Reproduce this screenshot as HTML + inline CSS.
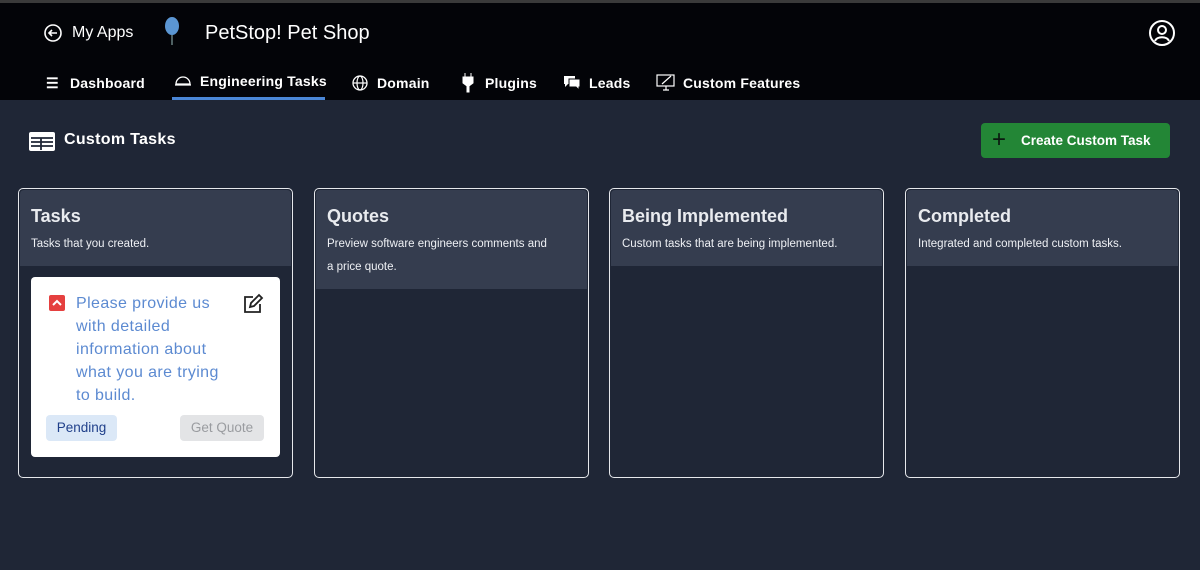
<!DOCTYPE html>
<html><head><style>
*{box-sizing:border-box;margin:0;padding:0}
body{width:1200px;height:570px;background:#1f2636;font-family:"Liberation Sans",sans-serif;position:relative;overflow:hidden;color:#fff}
.top{position:absolute;left:0;top:0;width:1200px;height:3px;background:#3a3a3a}
.hdr{position:absolute;left:0;top:3px;width:1200px;height:97px;background:#030408}
.a{position:absolute;white-space:nowrap}
.nav{font-size:14px;font-weight:bold;top:75px;letter-spacing:.2px}
.col{position:absolute;top:188px;width:275px;height:290px;border:1px solid #e6e8ec;border-radius:5px;background:#1f2636}
.ch{margin:1px;background:#353d4f;border-radius:4px 4px 0 0;padding:16px 11px 0}
.ch h3{font-size:18px;font-weight:bold;color:#e9ebef}
.ch p{font-size:11.5px;color:#eef0f4;margin-top:6px;line-height:23px;white-space:nowrap}
</style></head><body>
<div class="top"></div>
<div class="hdr"></div>
<svg class="a" style="left:43px;top:23px" width="20" height="20" viewBox="0 0 20 20"><circle cx="10" cy="10" r="8" fill="none" stroke="#fff" stroke-width="1.6"/><path d="M14 10H6M9 7L6 10L9 13" fill="none" stroke="#fff" stroke-width="1.6"/></svg>
<div class="a" style="left:72px;top:24px;font-size:16px">My Apps</div>
<svg class="a" style="left:162px;top:16px" width="20" height="30" viewBox="0 0 20 30"><ellipse cx="10" cy="10" rx="7" ry="9" fill="#5b96d3"/><path d="M10 19V29" stroke="#9bb" stroke-width="1"/></svg>
<div class="a" style="left:205px;top:22px;font-size:20px">PetStop! Pet Shop</div>
<svg class="a" style="left:1148px;top:19px" width="28" height="28" viewBox="0 0 28 28"><circle cx="14" cy="14" r="12" fill="none" stroke="#fff" stroke-width="2"/><circle cx="14" cy="11" r="4" fill="none" stroke="#fff" stroke-width="2"/><path d="M7 22C9 17 19 17 21 22" fill="none" stroke="#fff" stroke-width="2"/></svg>

<div class="a nav" style="left:46px;font-size:14px">☰</div>
<div class="a nav" style="left:70px">Dashboard</div>
<svg class="a" style="left:174px;top:74px" width="18" height="12" viewBox="0 0 18 12"><path d="M2 10A7 7 0 0 1 16 10ZM1 11H17" fill="none" stroke="#fff" stroke-width="1.3"/></svg>
<div class="a nav" style="left:200px;top:73px">Engineering Tasks</div>
<div class="a" style="left:172px;top:97px;width:153px;height:3px;background:#4a86d6"></div>
<svg class="a" style="left:352px;top:75px" width="16" height="16" viewBox="0 0 16 16"><circle cx="8" cy="8" r="7" fill="none" stroke="#fff" stroke-width="1.3"/><ellipse cx="8" cy="8" rx="3" ry="7" fill="none" stroke="#fff" stroke-width="1.2"/><path d="M1 8H15" stroke="#fff" stroke-width="1.2"/></svg>
<div class="a nav" style="left:377px">Domain</div>
<svg class="a" style="left:462px;top:73px" width="12" height="20" viewBox="0 0 12 20"><path d="M3 0V4M9 0V4M1 4H11V10L7 13V19H5V13L1 10Z" fill="#fff" stroke="#fff"/></svg>
<div class="a nav" style="left:485px">Plugins</div>
<svg class="a" style="left:563px;top:74px" width="18" height="16" viewBox="0 0 18 16"><path d="M1 2H12V10H5L2 13V10H1Z" fill="#fff"/><path d="M6 5H17V13H16V16L13 13H6Z" fill="#fff" stroke="#030408"/></svg>
<div class="a nav" style="left:589px">Leads</div>
<svg class="a" style="left:656px;top:73px" width="20" height="18" viewBox="0 0 20 18"><rect x="1" y="2" width="17" height="11" fill="none" stroke="#fff" stroke-width="1.2"/><path d="M7 17H13M10 13V17M6 11L15 3" stroke="#fff" stroke-width="1.2"/></svg>
<div class="a nav" style="left:683px">Custom Features</div>

<svg class="a" style="left:28px;top:131px" width="28" height="21" viewBox="0 0 28 21"><rect x="1" y="1" width="26" height="19" rx="2" fill="#fff"/><path d="M3 7H25M3 11H25M3 15H25M13 7V19" stroke="#1f2636" stroke-width="1.8"/></svg>
<div class="a" style="left:64px;top:131px;font-size:16px;font-weight:bold;letter-spacing:.3px">Custom Tasks</div>

<div class="a" style="left:981px;top:123px;width:189px;height:35px;background:#238636;border-radius:4px"></div>
<div class="a" style="left:992px;top:127px;font-size:24px;color:#0b1a10;line-height:26px">+</div>
<div class="a" style="left:1021px;top:133px;font-size:13.5px;font-weight:bold">Create Custom Task</div>

<div class="col" style="left:18px"><div class="ch" style="height:76px"><h3>Tasks</h3><p>Tasks that you created.</p></div>
<div style="position:absolute;left:12px;top:88px;width:249px;height:180px;background:#fff;border-radius:4px">
<div style="position:absolute;left:18px;top:18px;width:16px;height:16px;background:#e5403f;border-radius:2px"><svg width="16" height="16"><path d="M4 10L8 6L12 10" fill="none" stroke="#fff" stroke-width="2"/></svg></div>
<div style="position:absolute;left:45px;top:15px;font-size:16px;letter-spacing:.4px;line-height:23px;color:#5c8ad1;white-space:nowrap">Please provide us<br>with detailed<br>information about<br>what you are trying<br>to build.</div>
<svg style="position:absolute;left:211px;top:16px" width="22" height="22" viewBox="0 0 22 22"><path d="M11 4H3V19H18V11" fill="none" stroke="#222" stroke-width="1.8"/><path d="M8 14L9 10L17 2L20 5L12 13Z" fill="none" stroke="#222" stroke-width="1.8"/></svg>
<div style="position:absolute;left:15px;top:138px;width:71px;height:26px;background:#dbe8f7;border-radius:4px;color:#1f3f8a;font-size:13.5px;line-height:26px;text-align:center">Pending</div>
<div style="position:absolute;left:149px;top:138px;width:84px;height:26px;background:#e3e4e6;border-radius:4px;color:#9a9ca0;font-size:13.5px;line-height:26px;text-align:center">Get Quote</div>
</div></div>
<div class="col" style="left:314px"><div class="ch" style="height:99px"><h3>Quotes</h3><p>Preview software engineers comments and<br>a price quote.</p></div></div>
<div class="col" style="left:609px"><div class="ch" style="height:76px"><h3>Being Implemented</h3><p>Custom tasks that are being implemented.</p></div></div>
<div class="col" style="left:905px"><div class="ch" style="height:76px"><h3>Completed</h3><p>Integrated and completed custom tasks.</p></div></div>
</body></html>
